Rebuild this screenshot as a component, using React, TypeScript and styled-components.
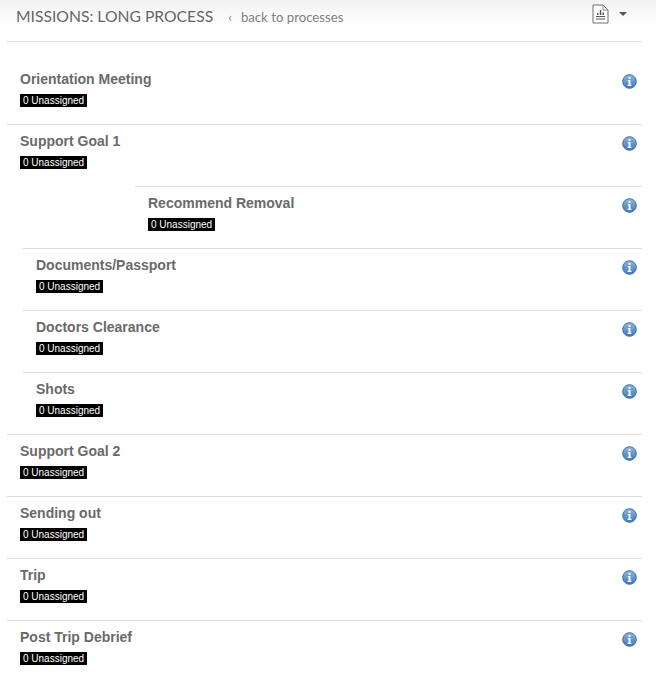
import * as React from "react";
import styled, { createGlobalStyle } from "styled-components";

const steps = [
  { name: "Orientation Meeting", indent: 0 },
  { name: "Support Goal 1", indent: 0 },
  { name: "Recommend Removal", indent: 128 },
  { name: "Documents/Passport", indent: 16 },
  { name: "Doctors Clearance", indent: 16 },
  { name: "Shots", indent: 16 },
  { name: "Support Goal 2", indent: 0 },
  { name: "Sending out", indent: 0 },
  { name: "Trip", indent: 0 },
  { name: "Post Trip Debrief", indent: 0 },
];

const InfoIcon = () => (
  <svg width="15" height="15" viewBox="0 0 15 15">
    <defs>
      <linearGradient id="infoFill" x1="0" y1="0" x2="0" y2="1">
        <stop offset="0" stopColor="#8fb6de" />
        <stop offset="1" stopColor="#3f78b5" />
      </linearGradient>
    </defs>
    <circle cx="7.5" cy="7.5" r="6.8" fill="url(#infoFill)" stroke="#3a6ea6" strokeWidth="1" />
    <rect x="6.5" y="3" width="2" height="1.8" fill="#fff" />
    <path d="M5.800 6h2.700v4.700h.9V12H5.600v-1.300h1V7.200h-.8z" fill="#fff" />
  </svg>
);

const ReportIcon = () => (
  <svg width="17" height="20" viewBox="0 0 17 20" fill="none">
    <path d="M1 1h10l5 5v13H1z" fill="#fff" stroke="#6e6e6e" strokeWidth="1" />
    <path d="M11 1v5h5" stroke="#888" strokeWidth="1" />
    <path d="M5 11h1.500V9H5zM7.800 11h1.500V6H7.800zM10.500 11H12V8.500h-1.500z" fill="#555" />
    <path d="M4 12.500h9M4 15h9" stroke="#555" strokeWidth="1" />
  </svg>
);

const App: React.FC = () => (
  <Page>
    <GlobalStyle />
    <Header>
      <Title>MISSIONS: LONG PROCESS</Title>
      <BackLink>
        <span>‹</span>
        back to processes
      </BackLink>
      <Actions>
        <ReportIcon />
        <Caret />
      </Actions>
    </Header>
    <StepList>
      {steps.map((step) => (
        <StepRow key={step.name} $indent={step.indent}>
          <StepInfo>
            <StepName>{step.name}</StepName>
            <Badge>0 Unassigned</Badge>
          </StepInfo>
          <InfoIcon />
        </StepRow>
      ))}
    </StepList>
  </Page>
);

export default App;

const GlobalStyle = createGlobalStyle`
  body {
    margin: 0;
    background: #fff;
    font-family: "Liberation Sans", Arial, sans-serif;
  }
`;

const Page = styled.div`
  width: 656px;
  height: 675px;
  overflow: hidden;
  background: linear-gradient(#f2f2f2 0, #fff 26px);
`;

const Header = styled.header`
  display: flex;
  align-items: center;
  height: 42px;
  margin: 0 14px 0 7px;
  padding: 0 15px 9px 9px;
  box-sizing: border-box;
  border-bottom: 1px solid #ddd;
`;

const Title = styled.h1`
  margin: 0;
  font-family: "Lato", sans-serif;
  font-size: 15.700px;
  font-weight: 400;
  color: #666;
`;

const BackLink = styled.a`
  display: flex;
  gap: 9px;
  margin: 1px 0 0 15px;
  font-family: "Lato", sans-serif;
  font-size: 13.200px;
  color: #808080;
`;

const Actions = styled.div`
  display: flex;
  align-items: center;
  gap: 10px;
  margin: 0 0 5px auto;
`;

const Caret = styled.span`
  width: 0;
  height: 0;
  border-left: 4px solid transparent;
  border-right: 4px solid transparent;
  border-top: 4px solid #555;
`;

const StepList = styled.div`
  display: flex;
  flex-direction: column;
  margin: 20px 14px 0 7px;
`;

const StepRow = styled.div<{ $indent: number }>`
  display: flex;
  justify-content: space-between;
  align-items: flex-start;
  height: 62px;
  box-sizing: border-box;
  margin-left: ${(p) => p.$indent}px;
  padding: 8px 5px 0 13px;
  border-top: 1px solid #ddd;

  &:first-child {
    border-top-color: transparent;
  }

  svg {
    margin-top: 3px;
  }
`;

const StepInfo = styled.div`
  display: flex;
  flex-direction: column;
  align-items: flex-start;
  gap: 7px;
`;

const StepName = styled.div`
  font-size: 14px;
  line-height: 16px;
  font-weight: 700;
  color: #6a6a6a;
`;

const Badge = styled.span`
  padding: 1px 3px 0;
  font-size: 10px;
  line-height: 12px;
  color: #fff;
  background: #000;
`;
